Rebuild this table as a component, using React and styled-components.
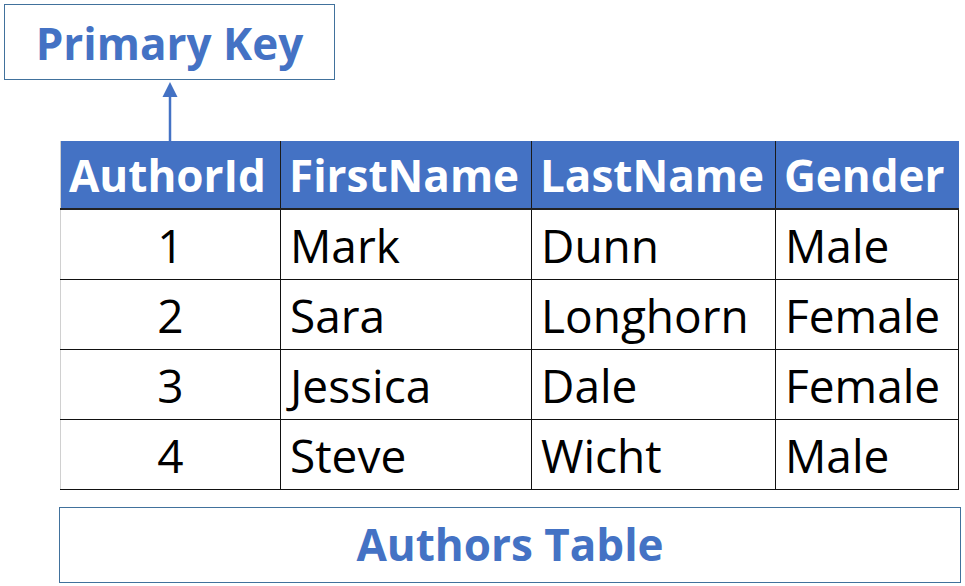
import React from 'react';
import styled, { createGlobalStyle } from 'styled-components';

const BLUE = '#4472C4';

const authors = [
  { id: 1, firstName: 'Mark', lastName: 'Dunn', gender: 'Male' },
  { id: 2, firstName: 'Sara', lastName: 'Longhorn', gender: 'Female' },
  { id: 3, firstName: 'Jessica', lastName: 'Dale', gender: 'Female' },
  { id: 4, firstName: 'Steve', lastName: 'Wicht', gender: 'Male' },
];

const columns = [
  { key: 'id', label: 'AuthorId', width: 220, center: true },
  { key: 'firstName', label: 'FirstName', width: 251 },
  { key: 'lastName', label: 'LastName', width: 244 },
  { key: 'gender', label: 'Gender', width: 183 },
];

// App component
const App = () => {
  return (
    <>
      <GlobalStyle />
      <Page>
        <LabelBox>Primary Key</LabelBox>
        <Arrow width="16" height="59" viewBox="0 0 16 59">
          <polygon points="8,0 0.5,15 15.5,15" fill={BLUE} />
          <line x1="8" y1="12" x2="8" y2="59" stroke={BLUE} strokeWidth="2.5" />
        </Arrow>
        <Table>
          <colgroup>
            {columns.map((col) => (
              <col key={col.key} style={{ width: col.width }} />
            ))}
          </colgroup>
          <thead>
            <tr>
              {columns.map((col) => (
                <HeadCell key={col.key}>{col.label}</HeadCell>
              ))}
            </tr>
          </thead>
          <tbody>
            {authors.map((author) => (
              <tr key={author.id}>
                {columns.map((col) => (
                  <Cell key={col.key} center={col.center}>
                    {author[col.key]}
                  </Cell>
                ))}
              </tr>
            ))}
          </tbody>
        </Table>
        <CaptionBox>Authors Table</CaptionBox>
      </Page>
    </>
  );
};

// Styled components
const GlobalStyle = createGlobalStyle`
  html, body {
    margin: 0;
    padding: 0;
    background: #ffffff;
  }
`;

const Page = styled.div`
  display: flex;
  flex-direction: column;
  align-items: flex-start;
  padding: 4px 0 0 4px;
  width: 965px;
  height: 586px;
  box-sizing: border-box;
  font-family: 'Open Sans', 'Noto Sans', sans-serif;
`;

const LabelBox = styled.div`
  width: 331px;
  height: 76px;
  box-sizing: border-box;
  border: 1px solid #41719c;
  display: flex;
  align-items: center;
  justify-content: center;
  color: ${BLUE};
  font-size: 44px;
  font-weight: 700;
  padding-top: 2px;
`;

const Arrow = styled.svg`
  display: block;
  margin: 2px 0 0 158px;
`;

const Table = styled.table`
  margin-left: 56px;
  width: 898px;
  table-layout: fixed;
  border-collapse: collapse;
  border-left: 1px solid #d0d0d0;
`;

const HeadCell = styled.th`
  height: 68px;
  padding: 0 0 0 8px;
  box-sizing: border-box;
  background: ${BLUE};
  color: #ffffff;
  font-size: 44px;
  font-weight: 700;
  text-align: left;
  white-space: nowrap;
  border-right: 1px solid #1a1a1a;
  border-bottom: 2px solid #222222;

  &:last-child {
    border-right: none;
  }
`;

const Cell = styled.td`
  height: 70px;
  padding: 2px 0 0 ${({ center }) => (center ? 0 : 9)}px;
  box-sizing: border-box;
  color: #000000;
  font-size: 46px;
  text-align: ${({ center }) => (center ? 'center' : 'left')};
  white-space: nowrap;
  border-right: 1px solid #111111;
  border-bottom: 1.5px solid #111111;
`;

const CaptionBox = styled.div`
  margin: 17px 0 0 55px;
  width: 902px;
  height: 76px;
  box-sizing: border-box;
  border: 1px solid #41719c;
  display: flex;
  align-items: center;
  justify-content: center;
  color: ${BLUE};
  font-size: 44px;
  font-weight: 700;
  padding-bottom: 2px;
`;

export default App;
